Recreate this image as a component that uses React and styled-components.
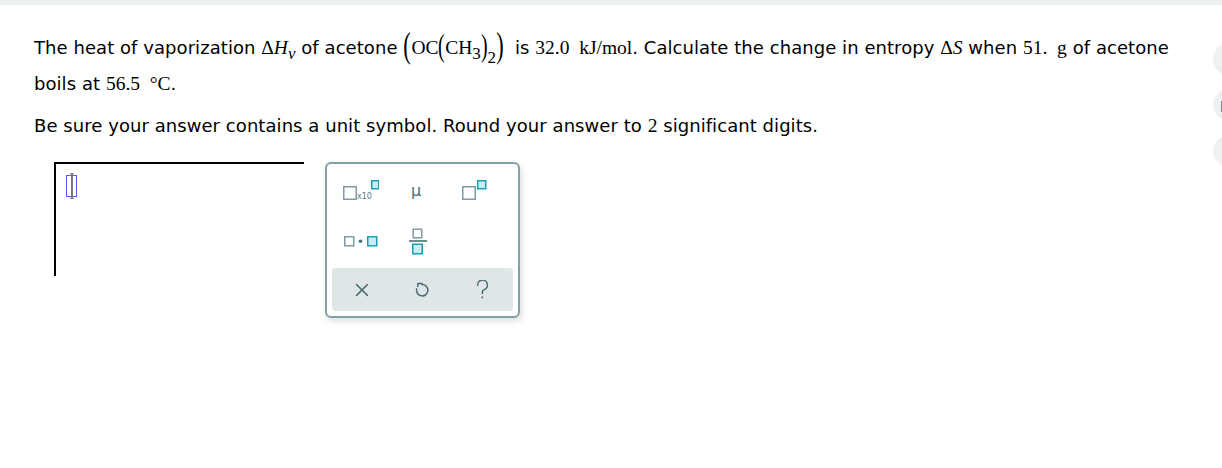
import React from 'react';
import styled, { createGlobalStyle } from 'styled-components';

const GlobalStyle = createGlobalStyle`
  html, body {
    margin: 0;
    padding: 0;
    background: #ffffff;
  }
  body {
    font-family: "DejaVu Sans", Verdana, sans-serif;
    color: #000;
  }
`;

const Page = styled.div`
  width: 1222px;
  height: 468px;
  display: flex;
  flex-direction: column;
  overflow: hidden;
`;

const TopStrip = styled.div`
  height: 5px;
  background: #edf1f2;
  flex-shrink: 0;
`;

const Body = styled.div`
  flex: 1;
  display: flex;
`;

const Content = styled.div`
  flex: 1;
  padding: 25px 0 0 34px;
`;

const SideRail = styled.div`
  width: 9px;
  overflow: hidden;
  padding-top: 38px;
  display: flex;
  flex-direction: column;
  gap: 14px;
`;

const RailButton = styled.div`
  position: relative;
  width: 32px;
  height: 32px;
  flex-shrink: 0;
  border-radius: 50%;
  background: #eef1f2;
`;

const RailMark = styled.span`
  position: absolute;
  left: 8px;
  top: 12px;
  width: 2px;
  height: 11px;
  background: #7d8c91;
`;

const Question = styled.p`
  margin: 0;
  font-size: 18px;
  line-height: 36px;
  letter-spacing: 0.06px;
  white-space: nowrap;
`;

const Instruction = styled.p`
  margin: 6px 0 0;
  font-size: 18px;
  line-height: 36px;
  letter-spacing: 0.06px;
  white-space: nowrap;
`;

const M = styled.span`
  font-family: "Liberation Serif", "Times New Roman", serif;
  font-size: 19.5px;
  letter-spacing: 0;
  font-style: ${p => (p.$italic ? 'italic' : 'normal')};
`;

const Sub = styled.span`
  font-family: "Liberation Serif", "Times New Roman", serif;
  font-size: 17px;
  font-style: ${p => (p.$italic ? 'italic' : 'normal')};
  position: relative;
  top: ${p => p.$drop || 5}px;
  line-height: 0;
`;

const Paren = styled.span`
  display: inline-block;
  font-family: "Liberation Serif", "Times New Roman", serif;
  font-size: ${p => p.$size || 30}px;
  line-height: 0;
  transform: scaleX(0.62);
  margin: 0 ${p => p.$after || -2}px 0 -2px;
  position: relative;
  top: ${p => p.$shift || 2}px;
`;

const AnswerRow = styled.div`
  display: flex;
  align-items: flex-start;
  gap: 21px;
  margin: 18px 0 0 20px;
`;

const AnswerBox = styled.div`
  width: 238px;
  height: 102px;
  border-top: 2px solid #000;
  border-left: 2px solid #000;
  padding: 10px 0 0 10px;
  box-sizing: content-box;
`;

const Caret = styled.div`
  position: relative;
  width: 11px;
  height: 22px;
  border: 1px solid #5656f5;
  box-sizing: border-box;
  margin-top: 1px;
`;

const CaretBar = styled.span`
  position: absolute;
  left: 3.5px;
  top: -3px;
  width: 2px;
  height: 26px;
  background: #777;
  &::before, &::after {
    content: '';
    position: absolute;
    left: -1px;
    width: 4px;
    height: 1px;
    background: #888;
  }
  &::before { top: 0; }
  &::after { bottom: 0; }
`;

const Keypad = styled.div`
  width: 195px;
  height: 156px;
  box-sizing: border-box;
  border: 2px solid #85a0a6;
  border-radius: 6px;
  background: #fff;
  box-shadow: 2px 3px 6px rgba(60, 80, 90, 0.18);
  padding: 0 5px 5px;
  display: flex;
  flex-direction: column;
`;

const KeyGrid = styled.div`
  display: grid;
  grid-template-columns: repeat(3, 1fr);
  grid-template-rows: 52px 50px;
  padding-right: 10px;
`;

const Key = styled.div`
  display: flex;
  align-items: center;
  justify-content: center;
  color: #4d6d75;
  font-family: "DejaVu Sans", sans-serif;
  font-size: 16px;
  padding-right: ${p => p.$pull || 0}px;
`;

const ActionBar = styled.div`
  margin-top: 2px;
  height: 44px;
  background: #dfe6e8;
  border-radius: 4px;
  display: grid;
  grid-template-columns: repeat(3, 1fr);
`;

const ActionKey = styled.div`
  display: flex;
  align-items: center;
  justify-content: center;
`;

const GRAY = '#7f9ba1';
const BLUE = '#1a9fb3';
const BLUE_FILL = '#c8edf2';
const INK = '#4a6870';

function Times10Icon() {
  return (
    <svg width="36" height="20" viewBox="0 0 36 20">
      <rect x="0.75" y="6.75" width="12.5" height="12.5" fill="none" stroke={GRAY} strokeWidth="1.5" />
      <text x="14" y="18.5" fontSize="8" fontFamily="DejaVu Sans, sans-serif" fill="#5a7a82">x10</text>
      <rect x="28.75" y="0.75" width="7" height="8" fill={BLUE_FILL} stroke={BLUE} strokeWidth="1.5" />
    </svg>
  );
}

function PowerIcon() {
  return (
    <svg width="25" height="20" viewBox="0 0 25 20">
      <rect x="0.75" y="6.75" width="12.5" height="12.5" fill="none" stroke={GRAY} strokeWidth="1.5" />
      <rect x="15.75" y="0.75" width="8" height="8" fill={BLUE_FILL} stroke={BLUE} strokeWidth="1.5" />
    </svg>
  );
}

function DotIcon() {
  return (
    <svg width="34" height="11" viewBox="0 0 34 11">
      <rect x="0.75" y="0.75" width="9" height="9" fill="none" stroke={GRAY} strokeWidth="1.5" />
      <circle cx="16.5" cy="5.3" r="1.8" fill="#4d6d75" />
      <rect x="23.75" y="0.75" width="9" height="9" fill={BLUE_FILL} stroke={BLUE} strokeWidth="1.5" />
    </svg>
  );
}

function FractionIcon() {
  return (
    <svg width="18" height="27" viewBox="0 0 18 27">
      <rect x="4.25" y="1.25" width="8.5" height="8.5" fill="none" stroke={GRAY} strokeWidth="1.5" />
      <line x1="0" y1="13" x2="18" y2="13" stroke="#4d6d75" strokeWidth="1.6" />
      <rect x="3.75" y="16.25" width="9.5" height="9.5" fill={BLUE_FILL} stroke={BLUE} strokeWidth="1.5" />
    </svg>
  );
}

function ClearIcon() {
  return (
    <svg width="14" height="14" viewBox="0 0 14 14">
      <path d="M1.5 1.5 L12.5 12.5 M12.5 1.5 L1.5 12.5" stroke={INK} strokeWidth="1.6" strokeLinecap="round" />
    </svg>
  );
}

function UndoIcon() {
  return (
    <svg width="16" height="17" viewBox="0 0 16 17">
      <path d="M8 2.5 H3.8 V5.6 M8 3.5 A5.7 5.7 0 1 1 2.6 8" fill="none" stroke={INK} strokeWidth="1.5" strokeLinecap="round" strokeLinejoin="round" />
    </svg>
  );
}

function HelpIcon() {
  return (
    <svg width="13" height="19" viewBox="0 0 13 19">
      <path d="M1.6 5.2 A4.9 4.9 0 1 1 8.2 9.6 C6.9 10.3 6.3 11.2 6.3 12.6 L6.3 13.6" fill="none" stroke={INK} strokeWidth="1.5" strokeLinecap="round" />
      <circle cx="6.3" cy="17.2" r="0.95" fill={INK} />
    </svg>
  );
}

export default function App() {
  return (
    <Page>
      <GlobalStyle />
      <TopStrip />
      <Body>
        <Content>
          <Question>
            The heat of vaporization <M>Δ</M><M $italic>H</M><Sub $italic $drop={5}>v</Sub> of acetone{' '}
            <Paren $size={36} $shift={3}>(</Paren>
            <M>OC</M>
            <Paren $size={32} $shift={2}>(</Paren>
            <M>CH</M><Sub>3</Sub>
            <Paren $size={32} $shift={2}>)</Paren>
            <Sub $drop={9}>2</Sub>
            <Paren $size={36} $shift={3} $after={3}>)</Paren>{' '}
            is <M>32.0&nbsp;&nbsp;kJ/mol</M>. Calculate the change in entropy <M>Δ</M><M $italic>S</M> when <M>51.&nbsp;&nbsp;g</M> of acetone
            <br />
            boils at <M>56.5&nbsp;&nbsp;°C</M>.
          </Question>
          <Instruction>
            Be sure your answer contains a unit symbol. Round your answer to <M>2</M> significant digits.
          </Instruction>
          <AnswerRow>
            <AnswerBox>
              <Caret>
                <CaretBar />
              </Caret>
            </AnswerBox>
            <Keypad>
              <KeyGrid>
                <Key><Times10Icon /></Key>
                <Key $pull={3}>μ</Key>
                <Key><PowerIcon /></Key>
                <Key><DotIcon /></Key>
                <Key><FractionIcon /></Key>
                <Key />
              </KeyGrid>
              <ActionBar>
                <ActionKey><ClearIcon /></ActionKey>
                <ActionKey><UndoIcon /></ActionKey>
                <ActionKey><HelpIcon /></ActionKey>
              </ActionBar>
            </Keypad>
          </AnswerRow>
        </Content>
        <SideRail>
          <RailButton />
          <RailButton><RailMark /></RailButton>
          <RailButton />
        </SideRail>
      </Body>
    </Page>
  );
}
